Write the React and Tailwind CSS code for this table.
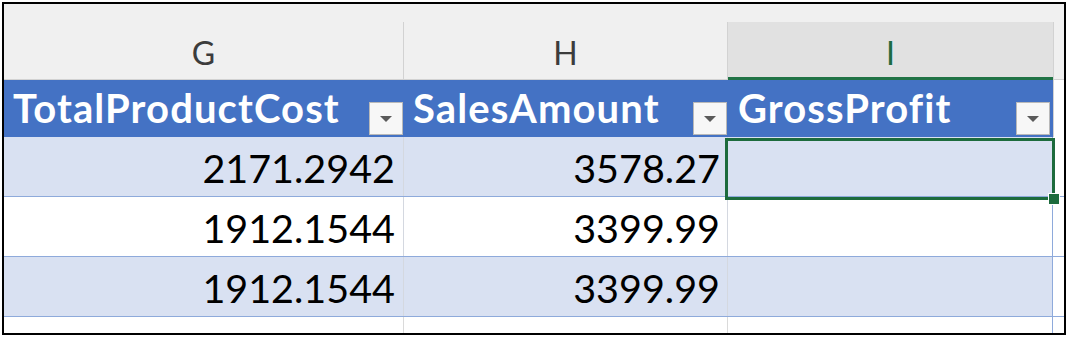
import React from "react";

function Dropdown() {
  return (
    <div className="self-end mb-[2px] w-[34px] h-[33px] bg-[#f7f7f7] border border-[#b9b9b9] flex items-center justify-center">
      <svg width="14" height="8" viewBox="0 0 14 8">
        <polygon points="1,1 13,1 7,7" fill="#5a5a5a" />
      </svg>
    </div>
  );
}

const rows = [
  { g: "2171.2942", h: "3578.27", blue: true },
  { g: "1912.1544", h: "3399.99", blue: false },
  { g: "1912.1544", h: "3399.99", blue: true },
];

export default function App() {
  return (
    <div className="w-[1069px] h-[339px] bg-white p-[2px] font-[Lato,sans-serif]">
      <div className="w-[1064px] h-[333px] border-2 border-black overflow-hidden flex flex-col bg-white">
        {/* top strip */}
        <div className="h-[18px] shrink-0 bg-[#f0f0f0]" />
        {/* column letters */}
        <div className="h-[58px] shrink-0 grid grid-cols-[400px_324px_325px_1fr]">
          <div className="bg-[#f0f0f0] border-r border-b border-[#d2d2d2] flex justify-center pt-[15px] text-[32px] leading-[32px] text-[#3c3c3c]">
            G
          </div>
          <div className="bg-[#f0f0f0] border-r border-b border-[#d2d2d2] flex justify-center pt-[15px] text-[32px] leading-[32px] text-[#3c3c3c]">
            H
          </div>
          <div className="bg-[#e1e1e1] border-b-[3px] border-[#217346] flex justify-center pt-[15px] text-[32px] leading-[32px] text-[#1e6b41]">
            I
          </div>
          <div className="bg-[#f0f0f0] border-l border-b border-[#d2d2d2]" />
        </div>
        {/* table header */}
        <div className="h-[57px] shrink-0 grid grid-cols-[400px_324px_325px_1fr]">
          <div className="bg-[#4472c4] flex justify-between pl-[9px] pr-[1px]">
            <span className="text-white font-bold text-[40px] tracking-[1.1px] leading-[56px]">TotalProductCost</span>
            <Dropdown />
          </div>
          <div className="bg-[#4472c4] flex justify-between pl-[9px] pr-[1px]">
            <span className="text-white font-bold text-[40px] tracking-[1.1px] leading-[56px]">SalesAmount</span>
            <Dropdown />
          </div>
          <div className="bg-[#4472c4] flex justify-between pl-[10px] pr-[3px]">
            <span className="text-white font-bold text-[40px] tracking-[1.1px] leading-[56px]">GrossProfit</span>
            <Dropdown />
          </div>
          <div className="bg-white border-l border-[#d2d2d2]" />
        </div>
        {/* data rows */}
        {rows.map((r, i) => {
          const bg = r.blue ? "bg-[#d9e1f2]" : "bg-white";
          return (
            <div
              key={i}
              className={`h-[60px] shrink-0 grid grid-cols-[400px_324px_325px_1fr] border-b border-[#8eaadb] ${i === 0 ? "relative z-10" : ""}`}
            >
              <div className={`${bg} border-r border-[#d4d8e0] flex justify-end pr-[8px] pt-[2px] text-[39.5px] leading-[57px] text-black`}>
                {r.g}
              </div>
              <div className={`${bg} border-r border-[#d4d8e0] flex justify-end pr-[7px] pt-[2px] text-[39.5px] leading-[57px] text-black`}>
                {r.h}
              </div>
              <div className={`${bg} border-r border-[#8eaadb] relative`}>
                {i === 0 && (
                  <div className="absolute top-[1px] left-[-3px] right-[-3px] bottom-[-4px] border-[3px] border-[#1d6b3d]">
                    <div className="absolute right-[-8px] bottom-[-8px] w-[12px] h-[12px] bg-[#1d6b3d] border border-white" />
                  </div>
                )}
              </div>
              <div className="bg-white" />
            </div>
          );
        })}
        <div className="flex-1 grid grid-cols-[400px_324px_325px_1fr]">
          <div className="bg-white border-r border-[#dadada]" />
          <div className="bg-white border-r border-[#dadada]" />
          <div className="bg-white border-r border-[#8eaadb]" />
          <div className="bg-white" />
        </div>
      </div>
    </div>
  );
}
